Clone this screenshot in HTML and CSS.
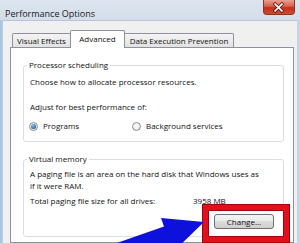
FILE: index.html
```html
<!DOCTYPE html>
<html>
<head>
<meta charset="utf-8">
<link rel="stylesheet" href="styles.css">
</head>
<body>
<div class="window">
  <div class="titlebar">
    <span class="title">Performance Options</span>
    <span class="close">
      <svg width="32" height="15" viewBox="0 0 32 15">
        <path d="M12.5 4 L19.5 11 M19.5 4 L12.5 11" stroke="#5a1a12" stroke-width="3.4" stroke-linecap="square"/>
        <path d="M12.5 4 L19.5 11 M19.5 4 L12.5 11" stroke="#ffffff" stroke-width="1.8" stroke-linecap="square"/>
      </svg>
    </span>
  </div>
  <div class="body">
    <div class="tabs">
      <div class="tab tab-ve">Visual Effects</div>
      <div class="tab tab-adv active">Advanced</div>
      <div class="tab tab-dep">Data Execution Prevention</div>
    </div>
    <div class="panel">
      <fieldset class="group g1">
        <legend>Processor scheduling</legend>
        <p class="line choose">Choose how to allocate processor resources.</p>
        <p class="line adjust">Adjust for best performance of:</p>
        <div class="radios">
          <label class="radio first"><span class="dot checked"></span>Programs</label>
          <label class="radio"><span class="dot"></span>Background services</label>
        </div>
      </fieldset>
      <fieldset class="group g2">
        <legend>Virtual memory</legend>
        <p class="para">A paging file is an area on the hard disk that Windows uses as<br>if it were RAM.</p>
        <div class="total"><span class="total-label">Total paging file size for all drives:</span><span>3958 MB</span></div>
        <div class="btnrow"><button class="btn">Change...</button></div>
      </fieldset>
    </div>
  </div>
  <div class="highlight"></div>
  <svg class="arrow" width="300" height="243" viewBox="0 0 300 243">
    <polygon points="204,222 161,218 164,226.6 88.6,252.8 94.6,269.8 170.2,243.6 173,252" fill="#0e10dc"/>
  </svg>
</div>
</body>
</html>
```
FILE: styles.css
```css
* { box-sizing: border-box; }
html, body { margin: 0; padding: 0; }
body {
  width: 300px;
  height: 243px;
  overflow: hidden;
  font-family: "Open Sans", "Noto Sans", sans-serif;
  font-size: 8px;
  color: #111;
}
.window {
  position: relative;
  width: 300px;
  height: 243px;
  overflow: hidden;
  background: linear-gradient(to right, #a9c3df 0, #b8cee6 3px, #c4d5e8 100%);
  display: flex;
  flex-direction: column;
}
.titlebar {
  height: 20px;
  flex: none;
  display: flex;
  justify-content: space-between;
  align-items: flex-start;
  background: linear-gradient(to bottom, #dce5ee, #d3deea);
}
.title {
  padding: 7px 0 0 5px;
  line-height: 14px;
  font-size: 9px;
  color: #1a1a1a;
}
.close {
  width: 32px;
  height: 15px;
  margin-right: 5px;
  border: 1px solid #8c3226;
  border-top: none;
  border-radius: 0 0 4px 4px;
  background: linear-gradient(to bottom, #e9a192 0, #d6604c 45%, #c3301c 55%, #cf4a30 100%);
  display: flex;
}
.close svg { display: block; margin-left: -1px; }
.body {
  flex: 1;
  margin: 0 3px;
  background: #f0f0f0;
  border-top: 1px solid #b7c6d6;
  display: flex;
  flex-direction: column;
}
.tabs {
  display: flex;
  align-items: flex-end;
  height: 17px;
  margin: 9px 0 0 9px;
  flex: none;
}
.tab {
  height: 14px;
  border: 1px solid #8e9199;
  border-bottom: none;
  background: linear-gradient(to bottom, #f4f4f4, #e2e2e2);
  text-align: center;
  line-height: 13px;
  white-space: nowrap;
  border-radius: 2px 2px 0 0;
}
.tab-ve { width: 59px; margin-right: -1px; }
.tab-adv { width: 55px; }
.tab-dep { width: 110px; margin-left: -1px; }
.tab.active {
  height: 18px;
  margin-bottom: -1px;
  background: #ffffff;
  position: relative;
  z-index: 1;
  line-height: 16px;
}
.panel {
  flex: 1;
  margin: 0 3px 0 7px;
  background: #ffffff;
  border: 1px solid #8e9199;
  padding: 0 9px 0 12px;
}
.group {
  margin: 0;
  padding: 0 0 0 6px;
  border: 1px solid #d8dee4;
  border-radius: 3px;
  min-width: 0;
}
.group legend {
  padding: 0 2px;
  margin-left: -3px;
  line-height: 12px;
}
.g1 { margin-top: 11px; padding-bottom: 9px; }
.g2 { margin-top: 11px; padding-bottom: 7px; }
.line, .para {
  margin: 0;
  line-height: 12px;
  white-space: nowrap;
}
.choose { margin-top: 5px; }
.adjust { margin-top: 13px; }
.radios {
  display: flex;
  margin: 7px 0 0 -1px;
  height: 12px;
  line-height: 12px;
}
.radio {
  display: flex;
  align-items: center;
}
.radio.first { width: 103px; }
.dot {
  width: 9px;
  height: 9px;
  border-radius: 50%;
  border: 1px solid #8a8f96;
  background: radial-gradient(circle at 40% 40%, #ffffff, #dcdfe3);
  margin-right: 5px;
  display: flex;
  align-items: center;
  justify-content: center;
}
.dot.checked::after {
  content: "";
  width: 5px;
  height: 5px;
  border-radius: 50%;
  background: radial-gradient(circle at 40% 35%, #8fc0ec, #1d5ea8 75%);
}
.para { margin-top: 3px; }
.total {
  display: flex;
  margin-top: 3px;
  line-height: 12px;
  white-space: nowrap;
}
.total-label { width: 163px; }
.btnrow {
  display: flex;
  justify-content: flex-end;
  margin: 7px 9px 0 0;
}
.btn {
  width: 60px;
  height: 15px;
  padding: 0;
  font-family: inherit;
  font-size: 8px;
  color: #111;
  border: 1px solid #707070;
  border-radius: 3px;
  background: linear-gradient(to bottom, #f4f4f4 0, #ebebeb 50%, #dcdcdc 50%, #cfcfcf 100%);
  line-height: 13px;
}
.highlight {
  position: absolute;
  left: 203px;
  top: 205px;
  width: 86px;
  height: 37px;
  border: 5px solid #e0101c;
  box-shadow: 0 0 0 1px #a3000c, inset 0 0 0 1px #a3000c;
}
.arrow {
  position: absolute;
  left: 0;
  top: 0;
  pointer-events: none;
}
```
